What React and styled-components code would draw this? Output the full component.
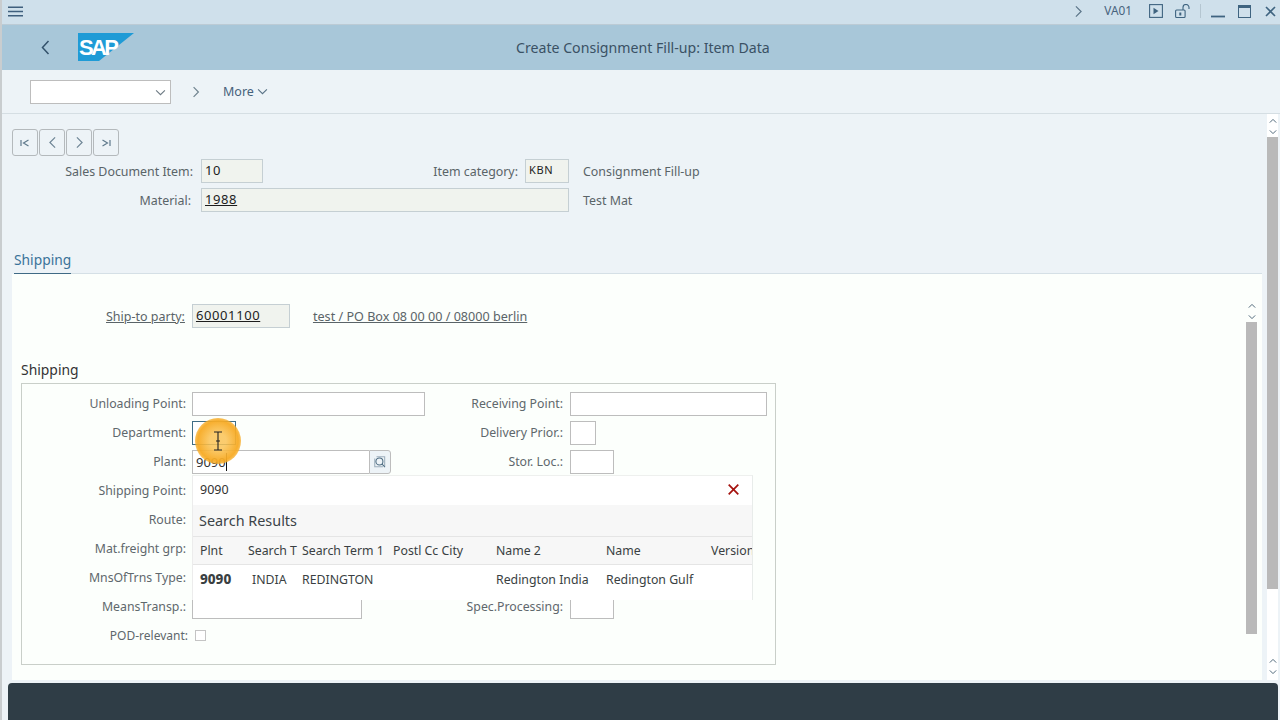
import React from "react";
import styled, { createGlobalStyle } from "styled-components";

const Global = createGlobalStyle`
  html, body { margin: 0; padding: 0; width: 1280px; height: 720px; overflow: hidden; }
  body { font-family: "Noto Sans", "Open Sans", sans-serif; color: #32363a; }
  * { box-sizing: border-box; }
`;

const Page = styled.div`
  position: relative; width: 1280px; height: 720px; display: flex; flex-direction: column;
  background: #edf3f7; border-left: 2px solid #c9cdcf; overflow: hidden;
`;
const TopBar = styled.div`
  height: 25px; flex: none; background: #cfe0eb; border-bottom: 1px solid #bccbd5;
  display: flex; align-items: center; padding: 0 1px 2px 6px; color: #3f5f7d;
`;
const Spacer = styled.div`flex: 1;`;
const SysCode = styled.span`font-size: 11.8px; color: #47637d; margin: 0 16px 2px 19px;`;
const IconSlot = styled.span`display: inline-flex; width: ${p => p.$w || 24}px; justify-content: center; align-items: center; margin-right: ${p => p.$mr || 0}px;`;
const Divider = styled.span`width: 1px; height: 14px; background: #b5c6d1; margin: 0 8px 0 8px;`;
const TitleBar = styled.div`
  position: relative; height: 45px; flex: none; background: #a8c7d9; display: flex; align-items: center; padding-left: 37px;
`;
const Logo = styled.span`display: inline-flex; margin-left: 26px; margin-top: -2px;`;
const Title = styled.div`
  position: absolute; left: 514px; top: 13px; font-size: 14.15px; line-height: 20px; color: #3a5164; white-space: nowrap;
`;
const Toolbar = styled.div`
  height: 44px; flex: none; background: #edf3f7; border-bottom: 1px solid #d5dee3; display: flex; align-items: center; padding-left: 28px;
`;
const Combo = styled.div`
  width: 141px; height: 24px; background: #fff; border: 1px solid #bdbdbd; display: flex; align-items: center; justify-content: flex-end; padding: 2px 4px 0 0;
`;
const ToolArrow = styled.span`display: inline-flex; margin: 0 21px 0 19px;`;
const More = styled.span`font-size: 12.5px; color: #45617a; display: inline-flex; align-items: center; gap: 3px;`;

const Body = styled.div`flex: 1; min-height: 0; display: flex;`;
const Main = styled.div`flex: 1; min-width: 0; display: flex; flex-direction: column;`;
const PagerRow = styled.div`display: flex; gap: 1px; padding: 15px 0 0 10px;`;
const PagerBtn = styled.button`
  width: 26px; height: 27px; padding: 0; border: 1px solid #b4b9bc; border-radius: 3px; background: #edf3f7;
  display: flex; align-items: center; justify-content: center;
`;
const Header = styled.div`
  display: grid; grid-template-columns: 199px 62px 262px 44px auto; grid-template-rows: 26px 26px;
  row-gap: 3px; margin-top: 2px; align-items: center; height: 55px;
`;
const HLabel = styled.label`font-size: 12.4px; color: #5a6468; text-align: right; padding-right: ${p => p.$pr || 8}px; white-space: nowrap;`;
const ReadOnly = styled.div`
  height: 24px; background: #f0f3ee; border: 1px solid #c5cfd3; font-size: 13px; letter-spacing: .6px; color: #1d1d1d; padding: 0 3px; line-height: 20px;
  grid-column: ${p => p.$span || "auto"};
`;
const Small = styled(ReadOnly)`font-size: 11px; letter-spacing: .6px;`;
const U = styled.span`text-decoration: underline;`;
const HText = styled.span`font-size: 12.4px; color: #5a6468; padding-left: 14px; white-space: nowrap;`;
const Tabs = styled.div`
  margin: 34px 5px 0 12px; height: 27px; border-bottom: 1px solid #d5e0e6; display: flex;
`;
const Tab = styled.div`
  font-size: 13.8px; color: #3a7299; height: 27px; line-height: 26px; border-bottom: 1px solid #3f6a85;
`;
const Panel = styled.div`
  flex: 1; min-height: 0; margin: 0 5px 0 10px; background: #fcfffc; display: flex; position: relative;
`;
const PanelMain = styled.div`flex: 1; min-width: 0; padding: 30px 0 0 9px;`;
const ShipRow = styled.div`display: flex; align-items: center; height: 24px; padding-left: 85px;`;
const LinkLabel = styled.span`font-size: 12.5px; color: #5a6468; text-decoration: underline; white-space: nowrap;`;
const LinkText = styled.span`font-size: 12.6px; color: #5a6468; text-decoration: underline; margin-left: 23px; white-space: nowrap;`;
const ShipValue = styled(ReadOnly)`margin-left: 7px; width: 98px;`;
const GroupTitle = styled.div`font-size: 13.9px; line-height: 20px; color: #333; margin-top: 32px; height: 21px;`;
const Group = styled.div`
  position: relative; width: 755px; height: 282px; margin-top: 2px; border: 1px solid #c9cfc9; padding: 5px 0 0 0;
  display: grid; grid-template-columns: 170px 260px 118px auto; grid-auto-rows: 29px; align-items: center;
`;
const Label = styled.label`font-size: 12.3px; color: #5f686c; text-align: right; padding-right: 6px; white-space: nowrap;`;
const LabelR = styled(Label)`padding-right: 7px;`;
const Input = styled.div`
  height: 24px; width: ${p => p.$w}px; background: #fff; border: 1px solid ${p => p.$focus ? "#3f6d86" : "#bdbdbd"};
`;
const PlantWrap = styled.div`display: flex; width: 199px; height: 24px;`;
const PlantInput = styled.div`
  flex: 1; border: 1px solid #bdbdbd; border-right: 0; background: #fff; font-size: 13px; line-height: 22px; padding-left: 3px; color: #333;
`;
const Caret = styled.span`border-right: 1px solid #111;`;
const F4 = styled.div`
  width: 22px; border: 1px solid #bdbdbd; border-radius: 0 3px 3px 0; background: #edf3f7; display: flex; align-items: center; justify-content: center;
`;
const Check = styled.div`width: 11px; height: 11px; border: 1px solid #c4c4c4; background: #fff; margin-left: 3px;`;
const ChkLabel = styled(Label)`font-size: 12px; padding-right: 4px;`;

const Suggest = styled.div`
  position: absolute; left: 170px; top: 91px; width: 561px; height: 125px; background: #fff; z-index: 3; display: flex; flex-direction: column;
  overflow: hidden; border-left: 1px solid #ececec; border-right: 1px solid #e8ecea; border-top: 1px solid #eef0ee;
`;
const SuggestTop = styled.div`
  height: 29px; flex: none; display: flex; align-items: center; justify-content: space-between; padding: 0 13px 2px 7px; font-size: 12.5px; color: #333;
`;
const SuggestTitle = styled.div`
  height: 31px; flex: none; background: #f7f7f7; font-size: 14.4px; color: #3c4347; padding-left: 6px; line-height: 31px;
`;
const ColRow = styled.div`
  height: ${p => p.$h}px; flex: none; display: grid; align-items: center; white-space: nowrap; font-size: 12.3px; color: #3a3f42;
  grid-template-columns: 48px 54px 91px 103px 110px 105px 48px; padding-left: 7px;
  background: ${p => p.$head ? "#f7f7f7" : "#fff"}; border-top: ${p => p.$head ? "1px solid #e5e5e5" : "0"}; border-bottom: ${p => p.$head ? "1px solid #e5e5e5" : "0"};
`;
const Clip = styled.span`overflow: hidden;`;
const Strong = styled.b`font-size: 13.5px; font-weight: 800;`;
const Pad = styled.span`padding-left: 4px;`;

const Pointer = styled.div`
  position: absolute; left: 193px; top: 418px; width: 46px; height: 46px; border-radius: 50%; z-index: 4; pointer-events: none;
  background: radial-gradient(circle, rgba(250,195,85,.85) 0 25%, rgba(247,170,35,.95) 62%, rgba(248,180,55,.5) 82%, rgba(250,190,70,0) 100%);
  display: flex; align-items: center; justify-content: center;
`;

const InnerScroll = styled.div`
  width: 16px; flex: none; display: flex; flex-direction: column; align-items: flex-start; padding-top: 26px;
`;
const ScrollBtn = styled.div`height: 11px; width: 11px; display: flex; align-items: center; justify-content: center;`;
const InnerThumb = styled.div`width: 11px; height: 312px; background: #b9b9b9; flex: none;`;
const OuterScroll = styled.div`
  width: 11px; flex: none; margin-right: 2px; background: #fff; display: flex; flex-direction: column; align-items: center; padding-top: 1px;
`;
const OuterThumb = styled.div`width: 11px; height: 452px; background: #b9b9b9; flex: none;`;
const OuterBottom = styled.div`margin-top: auto; padding-bottom: 3px;`;
const Footer = styled.div`
  height: 37px; flex: none; margin: 3px 0 0 6px; width: 1270px; background: #2f3d46; border-radius: 4px 4px 0 0;
`;

const Chev = ({ d = "r", s = 8, c = "#557086", w = 1.2 }) => {
  const p = { r: "M3 1l4 4-4 4", l: "M7 1L3 5l4 4", d: "M1 3l4 4 4-4", u: "M1 7l4-4 4 4" }[d];
  return <svg width={s} height={s} viewBox="0 0 10 10" fill="none" stroke={c} strokeWidth={w}><path d={p} /></svg>;
};

export default function App() {
  return (
    <Page>
      <Global />
      <TopBar>
        <svg width="15" height="11" viewBox="0 0 15 11" stroke="#3f5f7d" strokeWidth="1.4"><path d="M0 1.2h15M0 5.5h15M0 9.8h15" /></svg>
        <Spacer />
        <Chev d="r" s={13} c="#5a7387" w={.9} />
        <SysCode>VA01</SysCode>
        <IconSlot $w={16} $mr={10}>
          <svg width="14" height="14" viewBox="0 0 14 14"><rect x=".6" y=".6" width="12.8" height="12.8" fill="none" stroke="#3f6480" strokeWidth="1.1" /><path d="M4.5 3.8l5 3.2-5 3.2z" fill="#3f6480" /></svg>
        </IconSlot>
        <IconSlot $w={18}>
          <svg width="16" height="15" viewBox="0 0 16 15" fill="none" stroke="#3f6480" strokeWidth="1.1"><rect x=".6" y="6" width="9.5" height="7.5" rx="1" /><path d="M8 6V3.5a3 3 0 0 1 6 0V5" /><rect x="4.3" y="8.5" width="2" height="3" fill="#3f6480" stroke="none" /></svg>
        </IconSlot>
        <Divider />
        <IconSlot $w={18}>
          <svg width="14" height="14" viewBox="0 0 14 14"><path d="M0 12.5h14" stroke="#3f6480" strokeWidth="1.8" /></svg>
        </IconSlot>
        <IconSlot $w={34}>
          <svg width="13" height="13" viewBox="0 0 13 13"><rect x=".5" y=".5" width="12" height="12" fill="none" stroke="#3f6480" /><rect width="13" height="3" fill="#3f6480" /></svg>
        </IconSlot>
        <IconSlot $w={18}>
          <svg width="11" height="11" viewBox="0 0 11 11" stroke="#3f6480" strokeWidth="1.6"><path d="M1 1l9 9M10 1l-9 9" /></svg>
        </IconSlot>
      </TopBar>
      <TitleBar>
        <svg width="13" height="15" viewBox="0 0 10 15" fill="none" stroke="#33526b" strokeWidth="1.5"><path d="M8 1L2 7.5 8 14" /></svg>
        <Logo>
          <svg width="56" height="28" viewBox="0 0 56 28">
            <path d="M0 0h56L21 28H0z" fill="#1f9bd6" />
            <text x="1" y="22" fontFamily="Liberation Sans" fontWeight="700" fontSize="22" fill="#fff" letterSpacing="-2.6">SAP</text>
          </svg>
        </Logo>
        <Title>Create Consignment Fill-up: Item Data</Title>
      </TitleBar>
      <Toolbar>
        <Combo><Chev d="d" s={11} c="#6e7b84" w={1} /></Combo>
        <ToolArrow><Chev d="r" s={12} c="#70848f" w={1} /></ToolArrow>
        <More>More <Chev d="d" s={11} c="#5a7387" w={1} /></More>
      </Toolbar>
      <Body>
        <Main>
          <PagerRow>
            <PagerBtn><svg width="10" height="8" viewBox="0 0 10 8" fill="none" stroke="#5f7a8c" strokeWidth="1.2"><path d="M1 1v6M8.5 1L3.5 4l5 3" /></svg></PagerBtn>
            <PagerBtn><Chev d="l" s={13} c="#6d8494" w={.9} /></PagerBtn>
            <PagerBtn><Chev d="r" s={13} c="#6d8494" w={.9} /></PagerBtn>
            <PagerBtn><svg width="10" height="8" viewBox="0 0 10 8" fill="none" stroke="#5f7a8c" strokeWidth="1.2"><path d="M9 1v6M1.5 1l5 3-5 3" /></svg></PagerBtn>
          </PagerRow>
          <Header>
            <HLabel>Sales Document Item:</HLabel>
            <ReadOnly>10</ReadOnly>
            <HLabel $pr={7}>Item category:</HLabel>
            <Small>KBN</Small>
            <HText>Consignment Fill-up</HText>
            <HLabel $pr={10}>Material:</HLabel>
            <ReadOnly $span="2 / span 3"><U>1988</U></ReadOnly>
            <HText>Test Mat</HText>
          </Header>
          <Tabs><Tab>Shipping</Tab></Tabs>
          <Panel>
            <PanelMain>
              <ShipRow>
                <LinkLabel>Ship-to party:</LinkLabel>
                <ShipValue><U>60001100</U></ShipValue>
                <LinkText>test / PO Box 08 00 00 / 08000 berlin</LinkText>
              </ShipRow>
              <GroupTitle>Shipping</GroupTitle>
              <Group>
                <Label>Unloading Point:</Label><Input $w={233} /><LabelR>Receiving Point:</LabelR><Input $w={197} />
                <Label>Department:</Label><Input $w={44} $focus /><LabelR>Delivery Prior.:</LabelR><Input $w={26} />
                <Label>Plant:</Label>
                <PlantWrap>
                  <PlantInput><Caret>9090</Caret></PlantInput>
                  <F4><svg width="14" height="14" viewBox="0 0 12 12" fill="none" stroke="#4d6c82" strokeWidth=".9"><path d="M3 1.5h7v8M1.5 3v7h7" opacity=".5" /><circle cx="5.5" cy="5.5" r="3" /><path d="M7.8 7.8l2.5 2.5" /></svg></F4>
                </PlantWrap>
                <LabelR>Stor. Loc.:</LabelR><Input $w={44} />
                <Label>Shipping Point:</Label><span /><span /><span />
                <Label>Route:</Label><span /><span /><span />
                <Label>Mat.freight grp:</Label><span /><span /><span />
                <Label>MnsOfTrns Type:</Label><span /><span /><span />
                <Label>MeansTransp.:</Label><Input $w={170} /><LabelR>Spec.Processing:</LabelR><Input $w={44} />
                <ChkLabel>POD-relevant:</ChkLabel><Check />
                <Suggest>
                  <SuggestTop>
                    <span>9090</span>
                    <svg width="11" height="11" viewBox="0 0 11 11" stroke="#a5120e" strokeWidth="1.7"><path d="M.7.7l9.6 9.6M10.3.7L.7 10.3" /></svg>
                  </SuggestTop>
                  <SuggestTitle>Search Results</SuggestTitle>
                  <ColRow $head $h={29}>
                    <span>Plnt</span><Clip>Search T</Clip><span>Search Term 1</span><span>Postl Cc City</span><span>Name 2</span><span>Name</span><span>Version</span>
                  </ColRow>
                  <ColRow $h={28}>
                    <Strong>9090</Strong><Pad>INDIA</Pad><span>REDINGTON</span><span /><span>Redington India</span><span>Redington Gulf</span><span />
                  </ColRow>
                </Suggest>
              </Group>
            </PanelMain>
            <InnerScroll>
              <ScrollBtn><Chev d="u" s={8} c="#4a6376" /></ScrollBtn>
              <ScrollBtn><Chev d="d" s={8} c="#4a6376" /></ScrollBtn>
              <InnerThumb />
            </InnerScroll>
          </Panel>
        </Main>
        <OuterScroll>
          <ScrollBtn><Chev d="u" s={8} c="#4a6376" /></ScrollBtn>
          <ScrollBtn><Chev d="d" s={8} c="#4a6376" /></ScrollBtn>
          <OuterThumb />
          <OuterBottom>
            <ScrollBtn><Chev d="u" s={8} c="#4a6376" /></ScrollBtn>
            <ScrollBtn><Chev d="d" s={8} c="#4a6376" /></ScrollBtn>
          </OuterBottom>
        </OuterScroll>
      </Body>
      <Footer />
      <Pointer>
        <svg width="10" height="20" viewBox="0 0 10 20" fill="none" stroke="#222" strokeWidth="1.1"><path d="M1 1h8M5 1v18M1 19h8M3 10h4" /></svg>
      </Pointer>
    </Page>
  );
}
